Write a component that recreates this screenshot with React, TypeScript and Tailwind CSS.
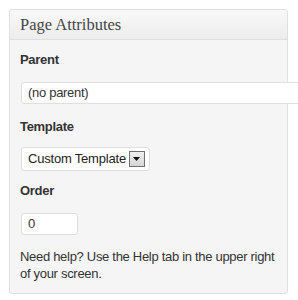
const labelCls = "block text-[13px] leading-[18px] font-bold tracking-[-0.3px] text-[#333]"

export default function App() {
  return (
    <div className="w-[298px] h-[300px] bg-white pl-[9px] pt-[9px] font-['Liberation_Sans',Arial,sans-serif]">
      <div className="w-[279px] h-[285px] rounded-[3px] border border-[#dfdfdf] bg-[#f5f5f5]">
        <div className="h-[30px] rounded-t-[3px] border-b border-[#dfdfdf] bg-gradient-to-b from-[#f9f9f9] to-[#ececec] pl-[10px] pt-[6px]">
          <h3 className="font-['Liberation_Serif',Georgia,serif] text-[16.5px] leading-[18px] text-[#464646]">
            Page Attributes
          </h3>
        </div>
        <div className="px-[10px] pt-[11px]">
          <label className={labelCls}>Parent</label>
          <div className="mt-[13px] ml-px flex h-[22px] w-[290px] items-center rounded-[3px] border border-[#dfdfdf] bg-white pl-[6px] text-[13px] tracking-[-0.3px] text-[#333]">
            (no parent)
          </div>

          <label className={labelCls + " mt-[14px]"}>Template</label>
          <div className="mt-[11px] ml-px flex h-[24px] w-[129px] items-center rounded-[3px] border border-[#dfdfdf] bg-white pl-[6px] text-[13px] tracking-[-0.2px] text-[#222]">
            <span>Custom Template</span>
            <span className="ml-[3px] flex h-[16px] w-[16px] items-center justify-center border border-[#707070] bg-gradient-to-b from-[#f0f0f0] to-[#d6d6d6]">
              <svg width="7" height="4" viewBox="0 0 7 4">
                <path d="M0 0h7L3.5 4z" fill="#111" />
              </svg>
            </span>
          </div>

          <label className={labelCls + " mt-[11px]"}>Order</label>
          <div className="mt-[13px] ml-px flex h-[22px] w-[57px] items-center rounded-[3px] border border-[#dfdfdf] bg-white pl-[6px] text-[13px] text-[#333]">
            0
          </div>

          <p className="mt-[13px] whitespace-nowrap text-[13px] leading-[17px] tracking-[-0.3px] text-[#333]">
            Need help? Use the Help tab in the upper right
            <br />
            of your screen.
          </p>
        </div>
      </div>
    </div>
  )
}
